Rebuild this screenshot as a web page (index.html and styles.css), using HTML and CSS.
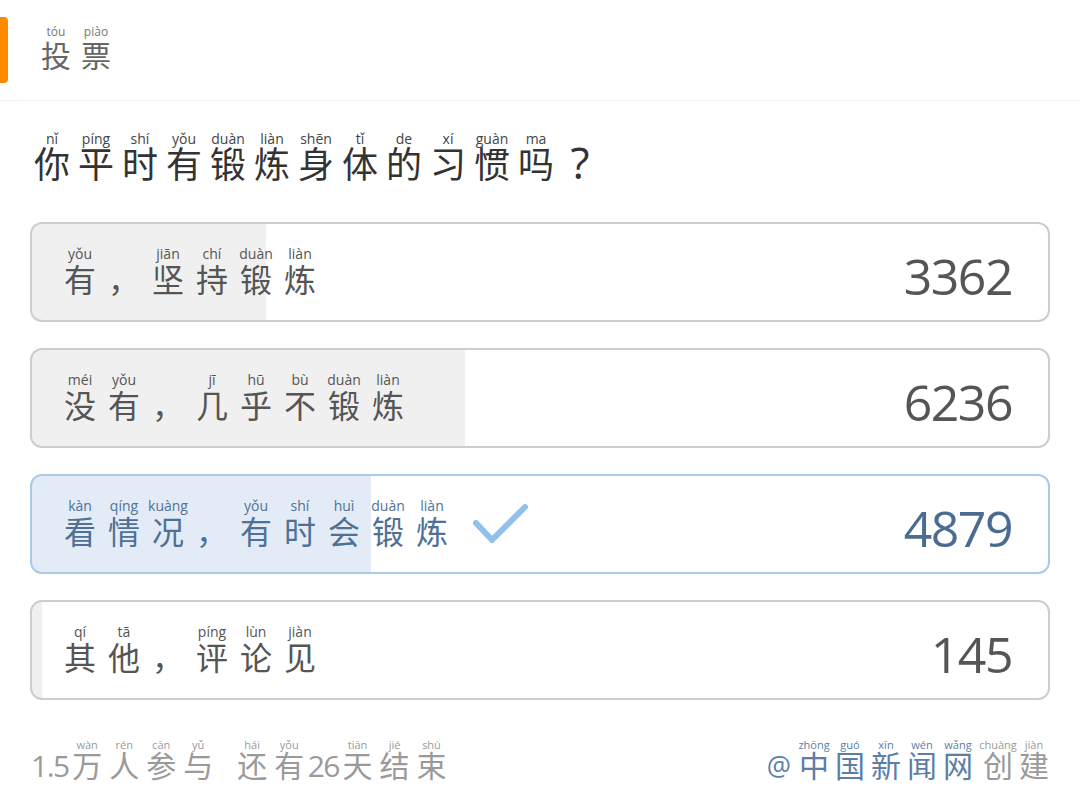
FILE: index.html
```html
<!DOCTYPE html>
<html lang="zh-CN">
<head>
<meta charset="utf-8">
<title>投票</title>
<link rel="stylesheet" href="styles.css">
</head>
<body>
<header class="top">
  <span class="mark"></span>
  <h1 class="title"><span class="py"><i>tóu</i>投</span><span class="py"><i>piào</i>票</span></h1>
</header>

<main class="poll">
  <h2 class="question"><span class="py"><i>nǐ</i>你</span><span class="py"><i>píng</i>平</span><span class="py"><i>shí</i>时</span><span class="py"><i>yǒu</i>有</span><span class="py"><i>duàn</i>锻</span><span class="py"><i>liàn</i>炼</span><span class="py"><i>shēn</i>身</span><span class="py"><i>tǐ</i>体</span><span class="py"><i>de</i>的</span><span class="py"><i>xí</i>习</span><span class="py"><i>guàn</i>惯</span><span class="py"><i>ma</i>吗</span><span class="py qm"><i>&nbsp;</i>?</span></h2>

  <ul class="options">
    <li class="opt" style="--p:22.99%">
      <span class="label"><span class="py"><i>yǒu</i>有</span><span class="py"><i>&nbsp;</i>，</span><span class="py"><i>jiān</i>坚</span><span class="py"><i>chí</i>持</span><span class="py"><i>duàn</i>锻</span><span class="py"><i>liàn</i>炼</span></span>
      <span class="count">3362</span>
    </li>
    <li class="opt" style="--p:42.65%">
      <span class="label"><span class="py"><i>méi</i>没</span><span class="py"><i>yǒu</i>有</span><span class="py"><i>&nbsp;</i>，</span><span class="py"><i>jī</i>几</span><span class="py"><i>hū</i>乎</span><span class="py"><i>bù</i>不</span><span class="py"><i>duàn</i>锻</span><span class="py"><i>liàn</i>炼</span></span>
      <span class="count">6236</span>
    </li>
    <li class="opt opt-selected" style="--p:33.37%">
      <span class="label"><span class="py"><i>kàn</i>看</span><span class="py"><i>qíng</i>情</span><span class="py"><i>kuàng</i>况</span><span class="py"><i>&nbsp;</i>，</span><span class="py"><i>yǒu</i>有</span><span class="py"><i>shí</i>时</span><span class="py"><i>huì</i>会</span><span class="py"><i>duàn</i>锻</span><span class="py"><i>liàn</i>炼</span></span>
      <svg class="check" width="56" height="44" viewBox="0 0 56 44" aria-hidden="true"><path d="M4 20 L20 37 L53 4" fill="none" stroke="#8fc1ec" stroke-width="6" stroke-linecap="round" stroke-linejoin="round"/></svg>
      <span class="count">4879</span>
    </li>
    <li class="opt" style="--p:0.99%">
      <span class="label"><span class="py"><i>qí</i>其</span><span class="py"><i>tā</i>他</span><span class="py"><i>&nbsp;</i>，</span><span class="py"><i>píng</i>评</span><span class="py"><i>lùn</i>论</span><span class="py"><i>jiàn</i>见</span></span>
      <span class="count">145</span>
    </li>
  </ul>
</main>

<footer class="foot">
  <p class="stats"><span class="num">1.5</span><span class="py"><i>wàn</i>万</span><span class="py"><i>rén</i>人</span><span class="py"><i>cān</i>参</span><span class="py"><i>yǔ</i>与</span><span class="sep"></span><span class="py"><i>hái</i>还</span><span class="py"><i>yǒu</i>有</span><span class="num">26</span><span class="py"><i>tiān</i>天</span><span class="py"><i>jié</i>结</span><span class="py"><i>shù</i>束</span></p>
  <p class="credit"><span class="at">@</span><span class="brand"><span class="py"><i>zhōng</i>中</span><span class="py"><i>guó</i>国</span><span class="py"><i>xīn</i>新</span><span class="py"><i>wén</i>闻</span><span class="py"><i>wǎng</i>网</span></span><span class="maker"><span class="py"><i>chuàng</i>创</span><span class="py"><i>jiàn</i>建</span></span></p>
</footer>
</body>
</html>
```

FILE: styles.css
```css
* { box-sizing: border-box; }

html, body {
  margin: 0;
  padding: 0;
  background: #ffffff;
}

body {
  width: 1080px;
  height: 804px;
  overflow: hidden;
  font-family: "Noto Sans CJK SC", "Noto Sans", sans-serif;
  color: #555555;
}

/* pinyin unit: syllable over character */
.py {
  display: inline-flex;
  flex-direction: column;
  align-items: center;
  flex: none;
}

.py i {
  font-style: normal;
  font-family: "Open Sans", "Noto Sans", sans-serif;
  white-space: nowrap;
  line-height: 12px;
}

/* header */
.top {
  height: 101px;
  display: flex;
  align-items: flex-start;
  border-bottom: 1px solid #efefef;
}

.mark {
  width: 8px;
  height: 66px;
  margin-top: 17px;
  background: #ff8a00;
  border-radius: 0 4px 4px 0;
}

.title {
  margin: 26px 0 0 28px;
  display: flex;
  font-weight: 400;
  color: #666666;
  font-size: 30px;
  line-height: 34px;
}

.title .py { width: 40px; }
.title .py i { font-size: 12px; margin-bottom: -1px; color: #777777; }

/* question */
.poll { padding: 0 30px; }

.question {
  margin: 32px 0 0 0;
  display: flex;
  font-weight: 400;
  font-size: 36px;
  line-height: 40px;
  color: #333333;
}

.question .py { width: 44px; }
.question .py i { font-size: 14px; margin-bottom: -3px; color: #444444; }
.question .qm {
  font-family: "Open Sans", "Noto Sans", sans-serif;
  font-size: 44px;
  width: 30px;
  margin-left: 7px;
}

/* options */
.options {
  list-style: none;
  margin: 40px 0 0 0;
  padding: 0;
  display: flex;
  flex-direction: column;
  gap: 26px;
}

.opt {
  height: 100px;
  border: 2px solid #cdcdcd;
  border-radius: 12px;
  display: flex;
  align-items: center;
  padding: 0 36px 0 26px;
  background: linear-gradient(to right, #f0f0f0 var(--p), #ffffff var(--p));
}

.label {
  display: flex;
  font-size: 32px;
  line-height: 38px;
  color: #555555;
}

.label .py { width: 44px; }
.label .py i { font-size: 14px; margin-bottom: -1px; color: #555555; }

.count {
  margin-left: auto;
  margin-top: 7px;
  font-family: "Open Sans", "Noto Sans", sans-serif;
  font-size: 50px;
  letter-spacing: -1.5px;
  color: #555555;
  line-height: 60px;
}

.check { margin-left: 18px; margin-top: 2px; }

.opt-selected {
  border-color: #a9cbe8;
  background: linear-gradient(to right, #e3ecf6 var(--p), #ffffff var(--p));
}

.opt-selected .label,
.opt-selected .label .py i { color: #4f7196; }
.opt-selected .count { color: #4b6c91; }

/* footer */
.foot {
  margin-top: 39px;
  padding: 0 28px 0 31px;
  display: flex;
  justify-content: space-between;
  align-items: flex-end;
}

.foot p {
  margin: 0;
  display: flex;
  align-items: flex-end;
  font-size: 30px;
  line-height: 34px;
  color: #9a9a9a;
}

.foot .py { width: 37px; }
.foot .py i { font-size: 11px; margin-bottom: -4px; }

.num {
  font-family: "Open Sans", "Noto Sans", sans-serif;
  font-size: 30px;
  letter-spacing: -1.5px;
  line-height: 34px;
  margin-bottom: -2px;
}

.sep { width: 17px; }

.credit .py { width: 36px; }

.at {
  font-family: "Open Sans", "Noto Sans", sans-serif;
  font-size: 27px;
  line-height: 34px;
  color: #5b82ad;
  margin-right: 5px;
  margin-bottom: -2px;
}

.brand { display: flex; color: #5b7ea6; }
.brand .py i { color: #5b7ea6; }
.maker { display: flex; margin-left: 4px; }
```
